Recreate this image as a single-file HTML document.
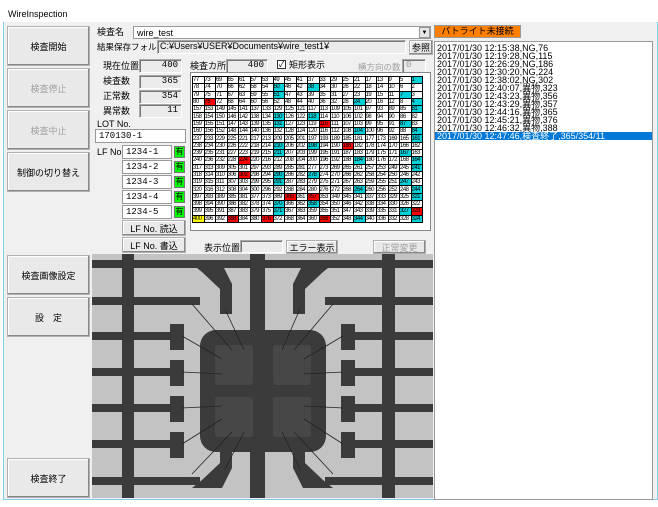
<!DOCTYPE html><html><head><meta charset="utf-8"><style>
*{box-sizing:border-box;margin:0;padding:0}
body{width:658px;height:507px;background:#fff;font-family:"Liberation Sans","Noto Sans CJK JP",sans-serif;font-size:9px;color:#000;position:relative;overflow:hidden}
.a{position:absolute;white-space:nowrap}
.win{left:3px;top:0;width:655px;height:500px;border:1px solid #7fd0e6;border-top:none;background:#f0f0f0}
.btn{position:absolute;background:#e9e9e9;border:1px solid #b0b0b0;box-shadow:inset -1px -1px 0 #888,inset 1px 1px 0 #fff;display:flex;align-items:center;justify-content:center;font-size:9px;white-space:nowrap}
.dis{color:#a0a0a0}
.box{position:absolute;background:#ebebeb;border:1px solid #a8a8a8;border-right-color:#fff;border-bottom-color:#fff;box-shadow:inset 1px 1px 0 #777;font-family:"Liberation Mono",monospace;font-size:9px;text-align:right;padding-right:3px;line-height:11px;white-space:nowrap;overflow:hidden}
.inp{position:absolute;background:#fff;border:1px solid #999;font-size:9px;padding-left:3px;line-height:12px;white-space:nowrap}
.g{position:absolute;background:#00ff00;border:1px solid #777;width:11px;height:12px;font-size:8px;line-height:10px;text-align:center}
.lb{font-size:9px;line-height:11px}
table{border-collapse:collapse;table-layout:fixed}
td{width:11.5px;height:7.3px;border:1px solid #000;border-width:1px 0 0 1px;font-size:6px;line-height:6px;padding:0;overflow:hidden;font-family:"Liberation Sans",sans-serif;letter-spacing:-0.5px;background:#fff}
td.c{background:#00d0d8}td.r{background:#f00}td.y{background:#ff0}
.log{font-family:"Liberation Sans","Noto Sans CJK JP",sans-serif;font-size:9px;line-height:8px;white-space:nowrap;padding-left:2px}
</style></head><body>
<div class="a win"></div>
<div class="a" style="left:3px;top:0;width:655px;height:22px;background:#fff"></div>
<div class="a" style="left:8px;top:9px;font-size:9px">WireInspection</div>

<div class="btn" style="left:7px;top:26px;width:83px;height:40px">検査開始</div>
<div class="btn dis" style="left:7px;top:68px;width:83px;height:40px">検査停止</div>
<div class="btn dis" style="left:7px;top:110px;width:83px;height:40px">検査中止</div>
<div class="btn" style="left:7px;top:152px;width:83px;height:40px">制御の切り替え</div>
<div class="btn" style="left:7px;top:255px;width:83px;height:40px">検査画像設定</div>
<div class="btn" style="left:7px;top:297px;width:83px;height:40px">設　定</div>
<div class="btn" style="left:7px;top:458px;width:83px;height:40px">検査終了</div>

<div class="a lb" style="left:97px;top:27px">検査名</div>
<div class="inp" style="left:133px;top:26px;width:298px;height:13px">wire_test</div>
<div class="a" style="left:419px;top:27px;width:11px;height:11px;background:#e6e6e6;border:1px solid #999;font-size:6px;text-align:center;line-height:10px">▼</div>
<div class="a lb" style="left:97px;top:42px;font-size:8.5px">結果保存フォルダ</div>
<div class="box" style="left:157px;top:40px;width:249px;height:14px;text-align:left;padding-left:2px;font-family:'Liberation Sans',sans-serif">C:¥Users¥USER¥Documents¥wire_test1¥</div>
<div class="btn" style="left:409px;top:40px;width:24px;height:15px">参照</div>

<div class="a lb" style="left:103px;top:61px">現在位置</div>
<div class="box" style="left:139px;top:59px;width:43px;height:14px">400</div>
<div class="a lb" style="left:103px;top:76px">検査数</div>
<div class="box" style="left:139px;top:75px;width:43px;height:14px">365</div>
<div class="a lb" style="left:103px;top:91px">正常数</div>
<div class="box" style="left:139px;top:90px;width:43px;height:14px">354</div>
<div class="a lb" style="left:103px;top:106px">異常数</div>
<div class="box" style="left:139px;top:104px;width:43px;height:14px">11</div>

<div class="a lb" style="left:190px;top:61px">検査カ所</div>
<div class="box" style="left:226px;top:59px;width:42px;height:14px">400</div>
<div class="a" style="left:277px;top:60px;width:9px;height:9px;border:1px solid #333;background:#fff;font-size:8px;line-height:7px;text-align:center">✓</div>
<div class="a lb" style="left:289px;top:60px">矩形表示</div>
<div class="a" style="left:358px;top:61px;font-size:8.5px;color:#a0a0a0">横方向の数</div>
<div class="box" style="left:402px;top:59px;width:24px;height:14px;text-align:left;padding-left:3px;color:#999">0</div>

<div class="a" style="left:190px;top:72px;width:241px;height:159px;background:#fff;border:1px solid #888"></div>
<table class="a" style="left:192px;top:76px;width:231px;border-right:1px solid #000;border-bottom:1px solid #000">
<tr><td>77</td><td>73</td><td>69</td><td>65</td><td>61</td><td>57</td><td>53</td><td>49</td><td>45</td><td>41</td><td>37</td><td>33</td><td>29</td><td>25</td><td>21</td><td>17</td><td>13</td><td>9</td><td>5</td><td class="c">1</td></tr>
<tr><td>78</td><td>74</td><td>70</td><td>66</td><td>62</td><td>58</td><td>54</td><td class="c">50</td><td>46</td><td>42</td><td class="c">38</td><td>34</td><td>30</td><td>26</td><td>22</td><td>18</td><td>14</td><td>10</td><td>6</td><td>2</td></tr>
<tr><td>79</td><td>75</td><td>71</td><td>67</td><td>63</td><td>59</td><td>55</td><td class="c">51</td><td>47</td><td>43</td><td>39</td><td>35</td><td>31</td><td>27</td><td>23</td><td>19</td><td>15</td><td>11</td><td class="c">7</td><td>3</td></tr>
<tr><td>80</td><td class="r">76</td><td>72</td><td>68</td><td>64</td><td>60</td><td>56</td><td>52</td><td>48</td><td>44</td><td>40</td><td>36</td><td>32</td><td>28</td><td class="c">24</td><td>20</td><td>16</td><td>12</td><td>8</td><td class="c">4</td></tr>
<tr><td>157</td><td>153</td><td>149</td><td>145</td><td>141</td><td>137</td><td>133</td><td>129</td><td>125</td><td>121</td><td>117</td><td>113</td><td>109</td><td>105</td><td>101</td><td>97</td><td>93</td><td>89</td><td>85</td><td class="c">81</td></tr>
<tr><td>158</td><td>154</td><td>150</td><td>146</td><td>142</td><td>138</td><td>134</td><td class="c">130</td><td>126</td><td>122</td><td class="c">118</td><td>114</td><td>110</td><td>106</td><td>102</td><td>98</td><td>94</td><td>90</td><td>86</td><td>82</td></tr>
<tr><td>159</td><td>155</td><td>151</td><td>147</td><td>143</td><td>139</td><td>135</td><td class="c">131</td><td>127</td><td>123</td><td>119</td><td class="r">115</td><td>111</td><td>107</td><td>103</td><td>99</td><td>95</td><td>91</td><td class="c">87</td><td>83</td></tr>
<tr><td>160</td><td>156</td><td>152</td><td>148</td><td>144</td><td>140</td><td>136</td><td>132</td><td>128</td><td>124</td><td>120</td><td>116</td><td>112</td><td>108</td><td class="c">104</td><td>100</td><td>96</td><td>92</td><td>88</td><td class="c">84</td></tr>
<tr><td>237</td><td>233</td><td>229</td><td>225</td><td>221</td><td>217</td><td>213</td><td>209</td><td>205</td><td>201</td><td>197</td><td>193</td><td>189</td><td>185</td><td>181</td><td>177</td><td>173</td><td>169</td><td>165</td><td class="c">161</td></tr>
<tr><td>238</td><td>234</td><td>230</td><td>226</td><td>222</td><td>218</td><td>214</td><td class="c">210</td><td>206</td><td>202</td><td class="c">198</td><td>194</td><td>190</td><td class="r">186</td><td>182</td><td>178</td><td>174</td><td>170</td><td>166</td><td>162</td></tr>
<tr><td>239</td><td>235</td><td>231</td><td>227</td><td>223</td><td>219</td><td>215</td><td class="c">211</td><td>207</td><td>203</td><td>199</td><td>195</td><td>191</td><td>187</td><td>183</td><td>179</td><td>175</td><td>171</td><td class="c">167</td><td>163</td></tr>
<tr><td>240</td><td>236</td><td>232</td><td>228</td><td class="r">224</td><td>220</td><td>216</td><td>212</td><td>208</td><td>204</td><td>200</td><td>196</td><td>192</td><td>188</td><td class="c">184</td><td>180</td><td>176</td><td>172</td><td>168</td><td class="c">164</td></tr>
<tr><td>317</td><td>313</td><td>309</td><td>305</td><td>301</td><td>297</td><td>293</td><td>289</td><td>285</td><td>281</td><td>277</td><td>273</td><td>269</td><td>265</td><td>261</td><td>257</td><td>253</td><td>249</td><td>245</td><td class="c">241</td></tr>
<tr><td>318</td><td>314</td><td>310</td><td>306</td><td class="r">302</td><td>298</td><td>294</td><td class="c">290</td><td>286</td><td>282</td><td class="c">278</td><td>274</td><td>270</td><td>266</td><td>262</td><td>258</td><td>254</td><td>250</td><td>246</td><td>242</td></tr>
<tr><td>319</td><td>315</td><td>311</td><td>307</td><td>303</td><td>299</td><td>295</td><td class="c">291</td><td>287</td><td>283</td><td>279</td><td>275</td><td>271</td><td>267</td><td>263</td><td>259</td><td>255</td><td>251</td><td class="c">247</td><td>243</td></tr>
<tr><td>320</td><td>316</td><td>312</td><td>308</td><td>304</td><td>300</td><td>296</td><td>292</td><td>288</td><td>284</td><td>280</td><td>276</td><td>272</td><td>268</td><td class="c">264</td><td>260</td><td>256</td><td>252</td><td>248</td><td class="c">244</td></tr>
<tr><td>397</td><td>393</td><td>389</td><td>385</td><td>381</td><td>377</td><td>373</td><td>369</td><td class="r">365</td><td>361</td><td class="r">357</td><td>353</td><td>349</td><td>345</td><td>341</td><td>337</td><td>333</td><td>329</td><td>325</td><td class="c">321</td></tr>
<tr><td>398</td><td>394</td><td>390</td><td>386</td><td>382</td><td>378</td><td>374</td><td class="c">370</td><td>366</td><td>362</td><td class="c">358</td><td>354</td><td>350</td><td>346</td><td>342</td><td>338</td><td>334</td><td>330</td><td>326</td><td>322</td></tr>
<tr><td>399</td><td>395</td><td>391</td><td>387</td><td>383</td><td>379</td><td>375</td><td class="c">371</td><td>367</td><td>363</td><td>359</td><td>355</td><td>351</td><td>347</td><td>343</td><td>339</td><td>335</td><td>331</td><td class="c">327</td><td class="r">323</td></tr>
<tr><td class="y">400</td><td>396</td><td>392</td><td class="r">388</td><td>384</td><td>380</td><td class="r">376</td><td>372</td><td>368</td><td>364</td><td>360</td><td class="r">356</td><td>352</td><td>348</td><td class="c">344</td><td>340</td><td>336</td><td>332</td><td>328</td><td class="c">324</td></tr>
</table>

<div class="a lb" style="left:97px;top:119px">LOT No.</div>
<div class="inp" style="left:95px;top:129px;width:91px;height:14px;font-family:'Liberation Mono',monospace">170130-1</div>
<div class="a lb" style="left:97px;top:147px">LF No.</div>
<div class="inp" style="left:122px;top:145px;width:50px;height:14px;font-family:'Liberation Mono',monospace">1234-1</div><div class="g" style="left:174px;top:146px">有</div>
<div class="inp" style="left:122px;top:160px;width:50px;height:14px;font-family:'Liberation Mono',monospace">1234-2</div><div class="g" style="left:174px;top:161px">有</div>
<div class="inp" style="left:122px;top:175px;width:50px;height:14px;font-family:'Liberation Mono',monospace">1234-3</div><div class="g" style="left:174px;top:176px">有</div>
<div class="inp" style="left:122px;top:190px;width:50px;height:14px;font-family:'Liberation Mono',monospace">1234-4</div><div class="g" style="left:174px;top:191px">有</div>
<div class="inp" style="left:122px;top:205px;width:50px;height:14px;font-family:'Liberation Mono',monospace">1234-5</div><div class="g" style="left:174px;top:206px">有</div>
<div class="btn" style="left:122px;top:220px;width:64px;height:16px">LF No. 読込</div>
<div class="btn" style="left:122px;top:237px;width:64px;height:16px">LF No. 書込</div>

<div class="a lb" style="left:204px;top:243px">表示位置</div>
<div class="box" style="left:240px;top:240px;width:43px;height:13px"></div>
<div class="btn" style="left:286px;top:240px;width:52px;height:14px">エラー表示</div>
<div class="btn dis" style="left:373px;top:240px;width:53px;height:14px">正常変更</div>

<div class="a" style="left:434px;top:25px;width:87px;height:13px;background:#ff8000;border:1px solid #999;text-align:center;font-size:9px;line-height:11px">パトライト未接続</div>
<div class="a" style="left:434px;top:41px;width:219px;height:459px;background:#fff;border:1px solid #999;padding-top:2px">
<div class="log">2017/01/30 12:15:38,NG,76</div>
<div class="log">2017/01/30 12:19:28,NG,115</div>
<div class="log">2017/01/30 12:26:29,NG,186</div>
<div class="log">2017/01/30 12:30:20,NG,224</div>
<div class="log">2017/01/30 12:38:02,NG,302</div>
<div class="log">2017/01/30 12:40:07,異物,323</div>
<div class="log">2017/01/30 12:43:23,異物,356</div>
<div class="log">2017/01/30 12:43:29,異物,357</div>
<div class="log">2017/01/30 12:44:16,異物,365</div>
<div class="log">2017/01/30 12:45:21,異物,376</div>
<div class="log">2017/01/30 12:46:32,異物,388</div>
<div class="log" style="background:#0078d7;color:#fff">2017/01/30 12:47:46,検査終了,365/354/11</div>
</div>

<svg class="a" style="left:92px;top:254px" width="341" height="244" viewBox="0 0 341 244">
<rect width="341" height="244" fill="#c3c3c3"/>
<g fill="#3b3b3b">
<rect x="30" y="0" width="12" height="244"/><rect x="290" y="0" width="13" height="244"/>
<rect x="0" y="6" width="341" height="8"/>
<rect x="0" y="43" width="108" height="8"/><rect x="233" y="43" width="108" height="8"/>
<rect x="0" y="223" width="108" height="8"/><rect x="233" y="223" width="108" height="8"/>
<rect x="0" y="78" width="92" height="8"/><rect x="78" y="70" width="14" height="26"/>
<rect x="0" y="114" width="92" height="8"/><rect x="78" y="106" width="14" height="26"/>
<rect x="0" y="150" width="92" height="8"/><rect x="78" y="142" width="14" height="26"/>
<rect x="0" y="186" width="92" height="8"/><rect x="78" y="178" width="14" height="26"/>
<rect x="249" y="78" width="92" height="8"/><rect x="249" y="70" width="14" height="26"/>
<rect x="249" y="114" width="92" height="8"/><rect x="249" y="106" width="14" height="26"/>
<rect x="249" y="150" width="92" height="8"/><rect x="249" y="142" width="14" height="26"/>
<rect x="249" y="186" width="92" height="8"/><rect x="249" y="178" width="14" height="26"/>
<rect x="158" y="0" width="15" height="244"/>
<rect x="108" y="76" width="126" height="122" rx="16"/>
<polygon points="100,10 130,10 140,30 140,60 128,60 128,35 110,18"/>
<polygon points="241,10 211,10 201,30 201,60 213,60 213,35 231,18"/>
<polygon points="100,234 130,234 140,214 140,184 128,184 128,209 110,226"/>
<polygon points="241,234 211,234 201,214 201,184 213,184 213,209 231,226"/>
</g>
<g fill="#474747"><rect x="123" y="91" width="38" height="40" rx="3"/><rect x="181" y="91" width="38" height="40" rx="3"/><rect x="123" y="143" width="38" height="40" rx="3"/><rect x="181" y="143" width="38" height="40" rx="3"/></g>
<g stroke="#222" stroke-width="0.8"><line x1="90" y1="82" x2="130" y2="105"/><line x1="90" y1="118" x2="130" y2="120"/><line x1="90" y1="154" x2="130" y2="152"/><line x1="90" y1="190" x2="130" y2="165"/><line x1="251" y1="82" x2="212" y2="105"/><line x1="251" y1="118" x2="212" y2="120"/><line x1="251" y1="154" x2="212" y2="152"/><line x1="251" y1="190" x2="212" y2="165"/><line x1="100" y1="50" x2="140" y2="96"/><line x1="133" y1="55" x2="152" y2="96"/><line x1="241" y1="50" x2="202" y2="96"/><line x1="208" y1="55" x2="190" y2="96"/><line x1="100" y1="220" x2="140" y2="178"/><line x1="133" y1="215" x2="152" y2="178"/><line x1="241" y1="220" x2="202" y2="178"/><line x1="208" y1="215" x2="190" y2="178"/></g>
</svg>
</body></html>
